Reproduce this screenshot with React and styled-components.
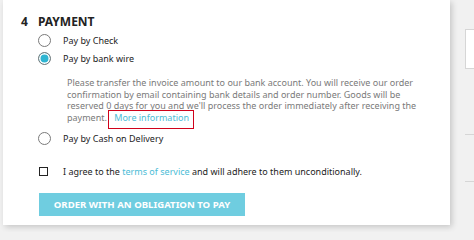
import React from 'react';
import styled, { createGlobalStyle } from 'styled-components';

const GlobalStyle = createGlobalStyle`
  body {
    margin: 0;
    background: #f1f1f1;
    font-family: "Noto Sans", "Open Sans", sans-serif;
  }
`;

const Page = styled.div`
  display: flex;
  width: 474px;
  height: 232px;
  overflow: hidden;
`;

const Card = styled.section`
  flex: 0 0 447px;
  height: 225px;
  margin-left: 3px;
  background: #fff;
  box-shadow: 2px 2px 6px rgba(0, 0, 0, 0.18);
  padding: 14px 0 0 18px;
  box-sizing: border-box;
`;

const Title = styled.h1`
  display: flex;
  gap: 10px;
  margin: 0;
  font-size: 12px;
  line-height: 16px;
  font-weight: 700;
  color: #232323;
`;

const Options = styled.div`
  margin: 2px 0 0 17px;
`;

const Option = styled.label`
  display: flex;
  align-items: center;
  gap: 12px;
  height: 17px;
  font-size: 9px;
  color: #232323;
  margin-top: ${(p) => p.$gap || 0}px;
`;

const Radio = styled.span`
  flex: 0 0 auto;
  width: 11px;
  height: 11px;
  border-radius: 50%;
  border: 1px solid #7a7a7a;
  background: ${(p) => (p.$checked ? '#2fb5d2' : '#fff')};
  box-shadow: ${(p) => (p.$checked ? 'inset 0 0 0 1.5px #fff' : 'none')};
`;

const Info = styled.p`
  margin: 10px 0 0 29px;
  width: 358px;
  font-size: 9px;
  line-height: 11.7px;
  color: #7a7a7a;
`;

const MoreLink = styled.a`
  color: #4bbcd6;
  text-decoration: none;
  outline: 1px solid #d0021b;
  padding: 0 4px 4px 5px;
`;

const Agree = styled.label`
  display: flex;
  align-items: center;
  gap: 15px;
  margin: 18px 0 0 18px;
  font-size: 9px;
  color: #232323;
`;

const Box = styled.span`
  flex: 0 0 auto;
  width: 7px;
  height: 7px;
  border: 1.5px solid #232323;
`;

const Terms = styled.a`
  color: #4bbcd6;
  text-decoration: none;
`;

const OrderButton = styled.button`
  margin: 15px 0 0 18px;
  width: 206px;
  height: 23px;
  border: 0;
  background: #6fcde0;
  color: #fff;
  font-family: inherit;
  font-size: 9.6px;
  font-weight: 700;
  text-transform: uppercase;
  padding: 0;
`;

const Side = styled.aside`
  margin-left: 15px;
  flex: 1;
  display: flex;
  flex-direction: column;
`;

const SideBox = styled.div`
  margin-top: 29px;
  height: 38px;
  background: #fff;
  border: 1px solid #d6d6d6;
  border-right: 0;
`;

const SideRule = styled.hr`
  margin: ${(p) => p.$top}px 0 0;
  border: 0;
  border-top: 1px solid #d6d6d6;
`;

export default function App() {
  return (
    <Page>
      <GlobalStyle />
      <Card>
        <Title>
          <span>4</span>
          <span>PAYMENT</span>
        </Title>
        <Options>
          <Option>
            <Radio />
            Pay by Check
          </Option>
          <Option $gap={1}>
            <Radio $checked />
            Pay by bank wire
          </Option>
          <Info>
            Please transfer the invoice amount to our bank account. You will receive our order
            confirmation by email containing bank details and order number. Goods will be
            reserved 0 days for you and we'll process the order immediately after receiving the
            payment. <MoreLink href="#">More information</MoreLink>
          </Info>
          <Option $gap={6}>
            <Radio />
            Pay by Cash on Delivery
          </Option>
        </Options>
        <Agree>
          <Box />
          <span>
            I agree to the <Terms href="#">terms of service</Terms> and will adhere to them
            unconditionally.
          </span>
        </Agree>
        <OrderButton>Order with an obligation to pay</OrderButton>
      </Card>
      <Side>
        <SideBox />
        <SideRule $top={65} />
        <SideRule $top={46} />
      </Side>
    </Page>
  );
}
